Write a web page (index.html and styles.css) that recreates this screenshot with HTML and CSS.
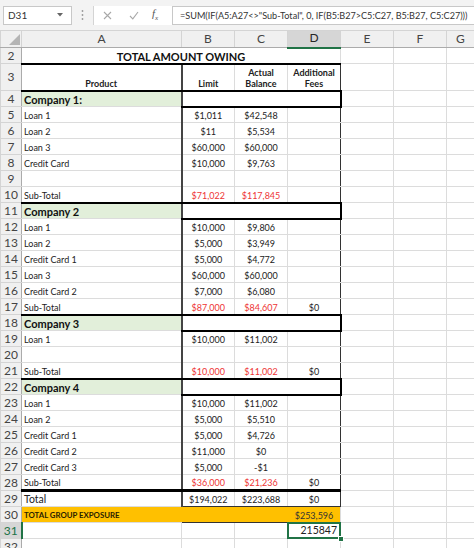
FILE: index.html
```html
<!DOCTYPE html>
<html>
<head>
<meta charset="utf-8">
<title>Total Amount Owing</title>
<link rel="stylesheet" href="styles.css">
</head>
<body>
<div class="fbar">
  <div class="namebox"><span>D31</span><svg class="caret" width="6" height="4" viewBox="0 0 6 4"><path d="M0 0H6L3 3.5Z" fill="#666"/></svg></div>
  <div class="grip"><svg width="3" height="12" viewBox="0 0 3 12"><circle cx="1.5" cy="2" r="0.9" fill="#9a9a9a"/><circle cx="1.5" cy="6" r="0.9" fill="#9a9a9a"/><circle cx="1.5" cy="10" r="0.9" fill="#9a9a9a"/></svg></div>
  <div class="fxbtns">
    <svg class="ico-x" width="9" height="9" viewBox="0 0 9 9"><path d="M1 1L8 8M8 1L1 8" stroke="#a8a8a8" stroke-width="1.1" fill="none"/></svg>
    <svg class="ico-ok" width="10" height="9" viewBox="0 0 10 9"><path d="M1 5L3.8 7.8L9 1" stroke="#a8a8a8" stroke-width="1.1" fill="none"/></svg>
    <span class="fx">f<sub>x</sub></span>
  </div>
  <div class="formula">=SUM(IF(A5:A27&lt;&gt;"Sub-Total", 0, IF(B5:B27&gt;C5:C27, B5:B27, C5:C27)))</div>
</div>
<table class="sheet">
  <colgroup><col class="w-rh"><col class="w-a"><col class="w-n"><col class="w-n"><col class="w-n"><col class="w-n"><col class="w-n"><col class="w-g"></colgroup>
  <tr class="ch">
    <th class="corner"><svg width="21" height="16" viewBox="0 0 21 16"><path d="M19 3V14H8Z" fill="#b5b5b5"/></svg></th>
    <th>A</th><th>B</th><th>C</th><th class="selc">D</th><th>E</th><th>F</th><th>G</th>
  </tr>
  <tr><th class="rh">2</th><td colspan="4" class="title">TOTAL AMOUNT OWING</td><td></td><td></td><td></td></tr>
  <tr class="hdr tb"><th class="rh">3</th><td class="a">Product</td><td class="b">Limit</td><td class="c">Actual<br>Balance</td><td class="d">Additional<br>Fees</td><td></td><td></td><td></td></tr>
  <tr class="co"><th class="rh">4</th><td class="a">Company 1:</td><td colspan="3" class="m"></td><td></td><td></td><td></td></tr>
  <tr class="tb"><th class="rh">5</th><td class="a">Loan 1</td><td class="b">$1,011</td><td class="c">$42,548</td><td class="d"></td><td></td><td></td><td></td></tr>
  <tr class="tb"><th class="rh">6</th><td class="a">Loan 2</td><td class="b">$11</td><td class="c">$5,534</td><td class="d"></td><td></td><td></td><td></td></tr>
  <tr class="tb"><th class="rh">7</th><td class="a">Loan 3</td><td class="b">$60,000</td><td class="c">$60,000</td><td class="d"></td><td></td><td></td><td></td></tr>
  <tr class="tb"><th class="rh">8</th><td class="a">Credit Card</td><td class="b">$10,000</td><td class="c">$9,763</td><td class="d"></td><td></td><td></td><td></td></tr>
  <tr class="tb"><th class="rh">9</th><td class="a"></td><td class="b"></td><td class="c"></td><td class="d"></td><td></td><td></td><td></td></tr>
  <tr class="tb sub"><th class="rh">10</th><td class="a">Sub-Total</td><td class="b r">$71,022</td><td class="c r">$117,845</td><td class="d"></td><td></td><td></td><td></td></tr>
  <tr class="co"><th class="rh">11</th><td class="a">Company 2</td><td colspan="3" class="m"></td><td></td><td></td><td></td></tr>
  <tr class="tb"><th class="rh">12</th><td class="a">Loan 1</td><td class="b">$10,000</td><td class="c">$9,806</td><td class="d"></td><td></td><td></td><td></td></tr>
  <tr class="tb"><th class="rh">13</th><td class="a">Loan 2</td><td class="b">$5,000</td><td class="c">$3,949</td><td class="d"></td><td></td><td></td><td></td></tr>
  <tr class="tb"><th class="rh">14</th><td class="a">Credit Card 1</td><td class="b">$5,000</td><td class="c">$4,772</td><td class="d"></td><td></td><td></td><td></td></tr>
  <tr class="tb"><th class="rh">15</th><td class="a">Loan 3</td><td class="b">$60,000</td><td class="c">$60,000</td><td class="d"></td><td></td><td></td><td></td></tr>
  <tr class="tb"><th class="rh">16</th><td class="a">Credit Card 2</td><td class="b">$7,000</td><td class="c">$6,080</td><td class="d"></td><td></td><td></td><td></td></tr>
  <tr class="tb sub"><th class="rh">17</th><td class="a">Sub-Total</td><td class="b r">$87,000</td><td class="c r">$84,607</td><td class="d">$0</td><td></td><td></td><td></td></tr>
  <tr class="co"><th class="rh">18</th><td class="a">Company 3</td><td colspan="3" class="m"></td><td></td><td></td><td></td></tr>
  <tr class="tb"><th class="rh">19</th><td class="a">Loan 1</td><td class="b">$10,000</td><td class="c">$11,002</td><td class="d"></td><td></td><td></td><td></td></tr>
  <tr class="tb"><th class="rh">20</th><td class="a"></td><td class="b"></td><td class="c"></td><td class="d"></td><td></td><td></td><td></td></tr>
  <tr class="tb sub"><th class="rh">21</th><td class="a">Sub-Total</td><td class="b r">$10,000</td><td class="c r">$11,002</td><td class="d">$0</td><td></td><td></td><td></td></tr>
  <tr class="co"><th class="rh">22</th><td class="a">Company 4</td><td colspan="3" class="m"></td><td></td><td></td><td></td></tr>
  <tr class="tb"><th class="rh">23</th><td class="a">Loan 1</td><td class="b">$10,000</td><td class="c">$11,002</td><td class="d"></td><td></td><td></td><td></td></tr>
  <tr class="tb"><th class="rh">24</th><td class="a">Loan 2</td><td class="b">$5,000</td><td class="c">$5,510</td><td class="d"></td><td></td><td></td><td></td></tr>
  <tr class="tb"><th class="rh">25</th><td class="a">Credit Card 1</td><td class="b">$5,000</td><td class="c">$4,726</td><td class="d"></td><td></td><td></td><td></td></tr>
  <tr class="tb"><th class="rh">26</th><td class="a">Credit Card 2</td><td class="b">$11,000</td><td class="c">$0</td><td class="d"></td><td></td><td></td><td></td></tr>
  <tr class="tb"><th class="rh">27</th><td class="a">Credit Card 3</td><td class="b">$5,000</td><td class="c">-$1</td><td class="d"></td><td></td><td></td><td></td></tr>
  <tr class="tb sub last"><th class="rh">28</th><td class="a">Sub-Total</td><td class="b r">$36,000</td><td class="c r">$21,236</td><td class="d">$0</td><td></td><td></td><td></td></tr>
  <tr class="tb tot"><th class="rh">29</th><td class="a">Total</td><td class="b">$194,022</td><td class="c">$223,688</td><td class="d">$0</td><td></td><td></td><td></td></tr>
  <tr class="exp"><th class="rh">30</th><td class="a">TOTAL GROUP EXPOSURE</td><td class="b"></td><td class="c"></td><td class="d">$253,596</td><td></td><td></td><td></td></tr>
  <tr><th class="rh selr">31</th><td></td><td></td><td></td><td class="d31"><span class="selbox"></span><span class="handle"></span>215847</td><td></td><td></td><td></td></tr>
  <tr><th class="rh">32</th><td></td><td></td><td></td><td></td><td></td><td></td><td></td></tr>
</table>
</body>
</html>
```
FILE: styles.css
```css
* { box-sizing: border-box; }
html, body { margin: 0; padding: 0; background: #fff; }
body {
  font-family: Lato, "Liberation Sans", sans-serif;
  color: #222;
  width: 474px;
  height: 548px;
  overflow: hidden;
}

/* formula bar */
.fbar {
  display: flex;
  align-items: center;
  height: 30px;
  padding-left: 3px;
  background: #f3f3f3;
}
.namebox {
  width: 69px;
  height: 19px;
  background: #fff;
  border: 1px solid #c8c8c8;
  display: flex;
  align-items: center;
  justify-content: space-between;
  padding: 0 8px 0 4px;
  font-size: 10px;
  color: #333;
}
.grip {
  width: 21px;
  display: flex;
  justify-content: center;
}
.fxbtns {
  width: 79px;
  height: 19px;
  background: #fff;
  border-left: 1px solid #d4d4d4;
  display: flex;
  align-items: center;
  padding-left: 9px;
}
.ico-ok { margin-left: 17px; }
.fx {
  margin-left: 13px;
  font-family: "Liberation Serif", serif;
  font-style: italic;
  font-size: 11px;
  color: #555;
}
.fx sub { font-size: 7px; }
.formula {
  flex: 1;
  min-width: 0;
  height: 19px;
  background: #fff;
  border: 1px solid #c8c8c8;
  border-right: none;
  padding-left: 7px;
  font-size: 9.1px;
  line-height: 17px;
  color: #333;
  white-space: nowrap;
  overflow: hidden;
}

/* sheet */
.sheet {
  border-collapse: collapse;
  table-layout: fixed;
  width: 474px;
}
.w-rh { width: 21px; }
.w-a { width: 160px; }
.w-n { width: 53px; }
.w-g { width: 28px; }

.sheet td, .sheet th {
  border: 1px solid #dcdcdc;
  padding: 0 2px 1px;
  height: 16px;
  font-size: 9px;
  line-height: 11px;
  font-weight: normal;
  vertical-align: bottom;
  white-space: nowrap;
  overflow: hidden;
}
.sheet .ch th {
  height: 17px;
  background: #f0f0f0;
  color: #444;
  font-size: 12px;
  line-height: 14px;
  text-align: center;
  vertical-align: middle;
  border-color: #d4d4d4;
  border-bottom-color: #ababab;
}
.sheet .ch th.corner { padding: 0; vertical-align: bottom; }
.corner svg { display: block; }
.sheet .ch th.selc {
  background: #d6d6d6;
  color: #262626;
  border-bottom: 2px solid #217346;
}
.sheet th.rh {
  background: #f0f0f0;
  color: #444;
  font-size: 12px;
  line-height: 14px;
  text-align: center;
  vertical-align: middle;
  padding: 0;
  border-color: #d4d4d4;
  border-right-color: #ababab;
}
.sheet th.selr {
  background: #d6d6d6;
  color: #217346;
  border-right: 2px solid #217346;
}

.b, .c, .d { text-align: center; }
.r { color: #ee3535; }

.sheet td.title {
  text-align: center;
  font-weight: bold;
  font-size: 11px;
  color: #111;
  border-bottom: 2px solid #000;
}

.tb .b { border-left: 2px solid #444; }
.tb .c { border-left: 1px solid #333; }
.tb .d { border-left: 1px solid #333; border-right: 1px solid #333; }

.sheet tr.hdr { height: 27px; }
.sheet .hdr td { height: 27px; font-weight: bold; color: #222; }
.hdr .a { text-align: center; }
.hdr .a, .hdr .b, .hdr .c, .hdr .d { border-bottom: 2px solid #000; }

.sheet .co .a {
  background: #e2efda;
  font-weight: bold;
  font-size: 11px;
  color: #111;
}
.co .m {
  border: 2px solid #000;
  border-left: 2px solid #444;
}

.sub .a { border-top: 1px solid #8a8a8a; border-bottom: 2px solid #000; }
.sub .b, .sub .c, .sub .d { border-top: 1px solid #333; border-bottom: 2px solid #000; }
.sub.last .a, .sub.last .b, .sub.last .c, .sub.last .d { border-bottom: 3px solid #000; }

.sheet .tot .a { font-size: 10.5px; }
.tot .b, .tot .c, .tot .d { border-bottom: 1px solid #333; }

.exp .a, .exp .b, .exp .c, .exp .d {
  background: #ffc000;
  border-right-color: #ffc000;
}
.exp .b, .exp .c, .exp .d { border-bottom: 1px solid #333; }
.sheet .exp .a {
  font-weight: bold;
  font-size: 7.8px;
  color: #2a2000;
}
.exp .d { color: #333; border-right-color: #dcdcdc; }

.sheet td.d31 {
  position: relative;
  overflow: visible;
  text-align: right;
  font-size: 10.5px;
  line-height: 13px;
  padding-right: 3px;
  color: #222;
}
.selbox {
  position: absolute;
  top: -1px; left: -1px; right: -1px; bottom: -1px;
  border: 2px solid #217346;
}
.handle {
  position: absolute;
  right: -4px;
  bottom: -4px;
  width: 6px;
  height: 6px;
  background: #217346;
  border: 1px solid #fff;
}
```
